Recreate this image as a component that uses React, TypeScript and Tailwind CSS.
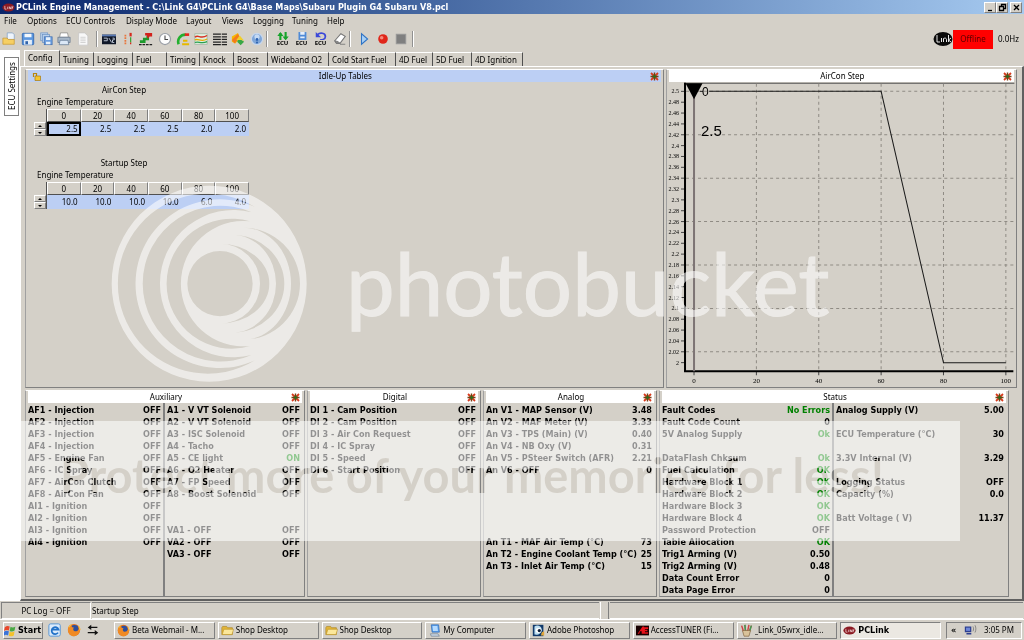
import React from "react";

type Row = [string, string, ("g" | "k")?] | null;

const RAISED = "border border-t-white border-l-white border-r-[#808080] border-b-[#808080]";
const SUNKEN = "border border-t-[#808080] border-l-[#808080] border-r-white border-b-white";
const BOLD = "font-['DejaVu_Sans_Condensed','DejaVu_Sans',sans-serif] text-[9px] font-bold";

/* ---------- small drawings ---------- */

function Svg({ children, size = "size-4" }: { children: React.ReactNode; size?: string }) {
  return (
    <svg viewBox="0 0 16 16" className={`${size} shrink-0`} aria-hidden="true">
      {children}
    </svg>
  );
}

const LinkOval = () => (
  <>
    <ellipse cx="8" cy="8" rx="7.5" ry="5" fill="#8b1a22" />
    <path d="M3.5 6v4h2M7 7v3M9 10V7l2 3V7M12.5 6v4M12.5 8.5l1.5-1.5" stroke="#f0d8d8" strokeWidth=".9" fill="none" />
  </>
);
const Folder = () => (
  <>
    <path d="M1 4.5 2 3h5l1 1.5h6V13H1z" fill="#e2b53a" stroke="#a57c17" strokeWidth=".7" />
    <path d="M1.5 13 3.5 6.5h12L13.5 13z" fill="#fbe79a" stroke="#b98d20" strokeWidth=".7" />
  </>
);
const Fox = () => (
  <>
    <circle cx="8" cy="8" r="7" fill="#e0701c" />
    <circle cx="8.6" cy="6.8" r="4.6" fill="#2d4f9e" />
    <path d="M1 7C1 4 3 2 5 1.6 4.5 4 6 5 8 5.2 6.5 6.6 7 9 9 9.4c2 .3 3.6-.6 4.4-2.4L15 6c.5 5-3 9-7 9S1 12 1 7z" fill="#f08a24" />
    <path d="M2 5c1-2 2-3 3-3.4M13.5 3.5 15 8" stroke="#f7c344" strokeWidth="1.2" fill="none" />
  </>
);

const fileIcons: [string, React.ReactNode][] = [
  ["Open", <>
    <path d="M6 1h6l2 2v6H6z" fill="#eef4fb" stroke="#7b9cc4" strokeWidth=".8" />
    <path d="M1 7h5l1 1.500h7V14H1z" fill="#f6cf62" stroke="#c9962c" strokeWidth=".8" />
  </>],
  ["Save", <>
    <rect x="1.5" y="1.5" width="13" height="13" rx="1" fill="#5b96de" stroke="#3468b0" />
    <path d="M4 2h8v4H4z" fill="#f3f8fd" />
    <path d="M3.500 9h9v5.500h-9z" fill="#e3edf8" />
    <path d="M5 10.5h3V14H5z" fill="#3164ab" />
  </>],
  ["Save All", <>
    <rect x="2" y="1" width="8" height="9" fill="#b9d0ec" stroke="#6d93c4" strokeWidth=".8" />
    <rect x="4" y="3" width="8" height="9" fill="#b9d0ec" stroke="#6d93c4" strokeWidth=".8" />
    <rect x="6" y="5.500" width="9" height="9" fill="#6d9fdf" stroke="#3d6cae" strokeWidth=".8" />
    <path d="M8 6h5v3H8zM8 11h5v3H8z" fill="#e6f0fb" />
  </>],
  ["Print", <>
    <path d="M4 1h8l1 5H3z" fill="#fff" stroke="#777" strokeWidth=".7" />
    <path d="M1 6h14v6H1z" fill="#a9b8c8" stroke="#62738a" strokeWidth=".8" />
    <path d="M3.500 9.500h9l1 5h-11z" fill="#dbe8f7" stroke="#5a718c" strokeWidth=".8" />
  </>],
  ["New", <>
    <path d="M3 1h7l3.500 3.500V15H3z" fill="#f8f8f8" stroke="#c4c4c4" strokeWidth=".8" />
    <path d="M5 6h6M5 8h6M5 10h6M5 12h6" stroke="#cecece" />
  </>],
];

const viewIcons: [string, React.ReactNode][] = [
  ["Gauges", <>
    <rect x="0" y="3" width="16" height="11" fill="#101828" />
    <path d="M0 3h16v2H0z" fill="#5a7ab5" />
    <path d="M2 7h4v3H2M8 7l3 5M12 7h2v2h-2v3h2" stroke="#c9d3e4" fill="none" />
  </>],
  ["Bars", <>
    <path d="M5 3v12" stroke="#e8763c" strokeWidth="2" strokeDasharray="2 1" />
    <path d="M11 1v4" stroke="#d62a1c" strokeWidth="2.500" />
    <path d="M11 6v6" stroke="#3aa53a" strokeWidth="1.500" />
    <path d="M11 12v2" stroke="#d62a1c" strokeWidth="1.500" />
  </>],
  ["Map", <>
    <path d="M1 11h5v-3h4V4" stroke="#1b9a2b" strokeWidth="3" fill="none" />
    <path d="M7 1h8v4h-3l-2 3-1-4H7z" fill="#d3211b" />
    <path d="M0 14.500h15" stroke="#222" strokeWidth="1.500" strokeDasharray="3 1" />
  </>],
  ["Clock", <>
    <circle cx="8" cy="8" r="6.300" fill="#fdfdfd" stroke="#9a9fa6" strokeWidth="1.400" />
    <path d="M8 4v4.500h3.500" stroke="#444" strokeWidth="1.200" fill="none" />
  </>],
  ["Dial", <>
    <path d="M3 14C1 8 5 3 11 3" stroke="#22b02e" strokeWidth="3" fill="none" />
    <path d="M10 3h5" stroke="#e3261b" strokeWidth="3" />
    <path d="M7 14h8M8 10h5" stroke="#e6b800" strokeWidth="2.500" />
  </>],
  ["Graph", <>
    <rect x="1" y="2" width="14" height="12" fill="#dff0df" stroke="#9cb09c" strokeWidth=".8" />
    <path d="M1 6c4-4 6 3 14-2" stroke="#d93025" strokeWidth="1.500" fill="none" />
    <path d="M1 9c4-2 7 3 14-1" stroke="#e6a700" strokeWidth="1.500" fill="none" />
    <path d="M1 12c4-2 7 2 14-1" stroke="#2a9f50" strokeWidth="1.500" fill="none" />
  </>],
  ["List", <path d="M0 2.500h9M0 5.500h9M0 8.500h9M0 11.500h9M0 14.500h9M10 2.500h6M10 5.500h6M10 8.500h6M10 11.500h6M10 14.500h6" stroke="#222" strokeWidth="1.500" />],
  ["Surface", <>
    <path d="M1 5 8 1l2 6-5 6-4-2z" fill="#f6b800" />
    <path d="M1 9 8 2l2 4-6 7z" fill="#f47a1d" />
    <path d="M9 7l6 4-4 4-4-4z" fill="#39a845" />
    <path d="M6 9l4-5 5 6-3-1z" fill="#f0cf2b" />
  </>],
  ["Help", <>
    <circle cx="8" cy="8" r="6.500" fill="#7ea6d9" stroke="#c7d6ea" strokeWidth="1.500" />
    <circle cx="8" cy="5.500" r="3" fill="#c5daf4" />
    <path d="M8 7v3" stroke="#2e63b0" strokeWidth="2.500" />
    <circle cx="8" cy="12" r="1.200" fill="#2e63b0" />
  </>],
];

const ecuIcons: [string, React.ReactNode][] = [
  ["Sync ECU", <>
    <path d="M5 9V1M11 0v8" stroke="#17a32b" strokeWidth="2.400" />
    <path d="M1.500 4.500 5 0l3.500 4.500zM7.500 5 11 9.500 14.500 5z" fill="#17a32b" />
  </>],
  ["Store ECU", <>
    <rect x="4" y="0" width="9" height="9" fill="#4f8ad6" />
    <path d="M6 0h5v3H6zM6 5h5v2H6z" fill="#e6effa" />
  </>],
  ["Reload ECU", <>
    <path d="M4 3c3-3 9-2 9 2 0 3-4 4-6 4" stroke="#3b48d8" strokeWidth="2" fill="none" />
    <path d="M2 0v6h6z" fill="#3b48d8" />
  </>],
];

const runIcons: [string, React.ReactNode][] = [
  ["Play", <path d="M4 2v12l7-6z" fill="#a8d0f5" stroke="#2f74c6" strokeWidth="1.200" />],
  ["Record", <>
    <circle cx="8" cy="8" r="5.500" fill="#e0261a" />
    <circle cx="6.500" cy="6.500" r="2" fill="#f58a7c" />
  </>],
  ["Stop", <rect x="2.500" y="2.500" width="11" height="11" fill="#7f7f7f" stroke="#9a9a9a" />],
];

function PinWheel() {
  return (
    <svg viewBox="0 0 9 9" className="size-[9px]" aria-hidden="true">
      <path d="M1 1l7 7M8 1 1 8" stroke="#d83a1c" strokeWidth="1.800" />
      <path d="M4.500 .5v8M.5 4.500h8" stroke="#7a3d12" strokeWidth="1.400" />
      <path d="M2.500 4.500h4M4.500 2.500v4" stroke="#2d6a1e" strokeWidth="1.600" />
    </svg>
  );
}

/* ---------- chrome ---------- */

function TitleBar() {
  return (
    <header className="flex h-[14px] items-center bg-linear-to-r from-[#0a246a] to-[#a6caf0] pr-[2px] pl-[2px]">
      <Svg size="size-[13px]"><LinkOval /></Svg>
      <h1 className={`ml-px flex-1 truncate leading-3 text-white ${BOLD}`}>
        PCLink Engine Management - C:\Link G4\PCLink G4\Base Maps\Subaru Plugin G4 Subaru V8.pcl
      </h1>
      {[
        ["Minimize", "M2 7.500h4"],
        ["Restore", "M3.500 3V1.500h4v4H6M1.500 3.500h4v4h-4zM1 3.500h5M3 1.500h5"],
        ["Close", "M2 2l5 5M7 2 2 7"],
      ].map(([label, d]) => (
        <button key={label} aria-label={label} className={`h-[11px] w-3 bg-[#d4d0c8] last:ml-[2px] ${RAISED}`}>
          <svg viewBox="0 0 9 9" className="mx-auto size-[9px]" aria-hidden="true">
            <path d={d} stroke="#000" strokeWidth="1.300" fill="none" />
          </svg>
        </button>
      ))}
    </header>
  );
}

const menus: [string, string][] = [
  ["File", "w-[23px]"], ["Options", "w-[39px]"], ["ECU Controls", "w-[60px]"], ["Display Mode", "w-[60px]"],
  ["Layout", "w-9"], ["Views", "w-[31px]"], ["Logging", "w-[39px]"], ["Tuning", "w-[35px]"], ["Help", "w-8"],
];

function MenuBar() {
  return (
    <nav className="flex h-[14px] items-center pl-1">
      {menus.map(([m, w]) => (
        <button key={m} className={`text-left whitespace-nowrap ${w}`}>{m}</button>
      ))}
    </nav>
  );
}

function ToolButtons({ items, className }: { items: [string, React.ReactNode][]; className: string }) {
  return (
    <div className={`grid justify-items-center ${className}`}>
      {items.map(([label, icon]) => (
        <button key={label} aria-label={label}><Svg size="size-[14px]">{icon}</Svg></button>
      ))}
    </div>
  );
}

const Divider = () => <div className="h-4 w-[2px] border-l border-l-[#909090] border-r border-r-white" />;

function ToolBar() {
  return (
    <div className="flex h-[22px] items-center">
      <ToolButtons items={fileIcons} className="mr-1 w-[92px] grid-cols-5" />
      <Divider />
      <ToolButtons items={viewIcons} className="ml-[2px] w-[166px] grid-cols-9" />
      <Divider />
      <div className="ml-[5px] grid w-[76px] grid-cols-4 justify-items-center">
        {ecuIcons.map(([label, icon]) => (
          <button key={label} aria-label={label} className="flex flex-col items-center">
            <svg viewBox="0 0 16 9" className="h-2 w-[14px]" aria-hidden="true">{icon}</svg>
            <span className="text-[6px] leading-[6px] font-bold">ECU</span>
          </button>
        ))}
        <button aria-label="Erase">
          <Svg size="size-[14px]">
            <path d="M2 10 9 2l5 3-6 8H4z" fill="#fff" stroke="#777" strokeWidth="1.200" />
            <path d="M2 10l4 1 2 2H4zM8 14h6" fill="#888" stroke="#777" />
          </Svg>
        </button>
      </div>
      <Divider />
      <ToolButtons items={runIcons} className="ml-[5px] mr-[2px] w-[54px] grid-cols-3" />
      <Divider />
      <div className="ml-auto flex items-center pr-[5px]">
        <svg viewBox="0 0 20 16" className="h-4 w-5" role="img" aria-label="Link">
          <ellipse cx="10" cy="8" rx="9.500" ry="7" fill="#0a0a0a" />
          <path d="M4 4v7h3M8.500 7v4M10.500 11V7.500c2-1 3 0 3 1V11M15.500 4v7M18 7l-2.500 2L18 11" stroke="#e8e8e8" strokeWidth="1" fill="none" />
        </svg>
        <span className="flex h-[19px] w-10 items-center justify-center bg-[#ff0000] text-[#5a0000]">Offline</span>
        <span className="ml-[5px]">0.0Hz</span>
      </div>
    </div>
  );
}

const tabs: [string, string][] = [
  ["Tuning", "w-[34px]"], ["Logging", "w-[39px]"], ["Fuel", "w-[34px]"], ["Timing", "w-[33px]"], ["Knock", "w-[34px]"],
  ["Boost", "w-[34px]"], ["Wideband O2", "w-[61px]"], ["Cold Start Fuel", "w-[67px]"], ["4D Fuel", "w-[37px]"],
  ["5D Fuel", "w-[39px]"], ["4D Ignition", "w-[51px]"],
];

function TabStrip() {
  return (
    <div role="tablist" className="flex h-4 items-end pl-1">
      <button role="tab" aria-selected="true" className="h-4 w-9 border-t border-r border-l border-t-white border-r-[#505050] border-l-white pb-px pl-[3px] text-left">
        Config
      </button>
      {tabs.map(([t, w]) => (
        <button key={t} role="tab" aria-selected="false" className={`h-[14px] border-t border-r border-t-white border-r-[#505050] pl-[3px] text-left whitespace-nowrap ${w}`}>
          {t}
        </button>
      ))}
    </div>
  );
}

/* ---------- panels ---------- */

function Panel({ title, tint, lock, children }: { title: string; tint?: boolean; lock?: boolean; children: React.ReactNode }) {
  return (
    <section className="flex min-w-0 flex-col border border-t-white border-r-[#808080] border-b-[#808080] border-l-[#a0a0a0]">
      <div className={`mx-[2px] flex h-3 shrink-0 items-center pr-[2px] pl-1 ${tint ? "bg-[#bccff4]" : "bg-white"}`}>
        <span className="w-[9px]">
          {lock && (
            <svg viewBox="0 0 9 9" className="size-[9px]" aria-hidden="true">
              <path d="M1.500 5V1.500h3V4" stroke="#b8860b" strokeWidth="1.200" fill="none" />
              <path d="M3 4h5.500v4.500H3z" fill="#f4c531" stroke="#a87a10" strokeWidth=".7" />
            </svg>
          )}
        </span>
        <h2 className="flex-1 text-center">{title}</h2>
        <button aria-label={`${title} options`}><PinWheel /></button>
      </div>
      {children}
    </section>
  );
}

function StepTable({ title, values, active }: { title: string; values: string[]; active?: boolean }) {
  return (
    <div className="h-[73px] w-[222px]">
      <h3 className="w-[192px] text-center leading-3">{title}</h3>
      <p className="pl-[9px] leading-[11px]">Engine Temperature</p>
      <div className="mt-[2px] flex items-end pl-[6px]">
        <div className="flex w-3 flex-col">
          <button aria-label={`${title} up`} className={`flex h-[7px] items-center justify-center ${RAISED}`}>
            <svg viewBox="0 0 4 2" className="h-[2px] w-1" aria-hidden="true"><path d="M0 2 2 0l2 2z" /></svg>
          </button>
          <button aria-label={`${title} down`} className={`flex h-[7px] items-center justify-center ${RAISED}`}>
            <svg viewBox="0 0 4 2" className="h-[2px] w-1" aria-hidden="true"><path d="M0 0h4L2 2z" /></svg>
          </button>
        </div>
        <table className="w-[203px] table-fixed border-separate border-spacing-0 border-l border-l-[#505050] leading-[10px]" aria-label={title}>
          <thead>
            <tr>
              {["0", "20", "40", "60", "80", "100"].map((h) => (
                <th key={h} scope="col" className="h-[13px] border-t border-r border-b border-l border-t-white border-r-[#808080] border-b-[#505050] border-l-white p-0 text-center font-normal">
                  {h}
                </th>
              ))}
            </tr>
          </thead>
          <tbody>
            <tr>
              {values.map((v, i) => (
                <td key={i} className={`h-[14px] bg-[#bccff4] p-0 text-right ${active && i === 0 ? "border-2 border-black pr-px" : "pr-[3px]"}`}>
                  {v}
                </td>
              ))}
            </tr>
          </tbody>
        </table>
      </div>
    </div>
  );
}

function StepChart() {
  const X = (v: number) => 694 + v * 3.115;
  const Y = (v: number) => 362.5 - (v - 2) * 542;
  const ticks = Array.from({ length: 26 }, (_, i) => Math.round((2.5 - i * 0.02) * 100) / 100);
  return (
    <div className="flex min-h-0 flex-1 items-start">
      <svg viewBox="667 83 349 303" className="h-full w-full" role="img" aria-label="AirCon Step against engine temperature">
        <path d="M684 83.500h330" stroke="#555" strokeWidth="1" />
        {ticks.map((t, i) => (
          <g key={t}>
            <text x="679" y={Y(t) + 2} textAnchor="end" className="font-['Liberation_Serif',serif] text-[6px]">{String(t)}</text>
            <path d={`M681 ${Y(t)}h3`} stroke="#444" strokeWidth="1" />
            {i % 4 === 0 && <path d={`M686 ${Y(t)}h327`} stroke="#8f8b84" strokeWidth="1" strokeDasharray="3 3" />}
          </g>
        ))}
        {[20, 40, 60, 80, 100].map((v) => (
          <path key={v} d={`M${X(v)} 84V370`} stroke="#8f8b84" strokeWidth="1" strokeDasharray="3 3" />
        ))}
        {[0, 20, 40, 60, 80, 100].map((v) => (
          <g key={v}>
            <path d={`M${X(v)} 371v4`} stroke="#444" />
            <text x={X(v)} y="383" textAnchor="middle" className="font-['Liberation_Serif',serif] text-[7px]">{v}</text>
          </g>
        ))}
        <path d="M685 83v289M684 371h329" stroke="#000" strokeWidth="2" fill="none" />
        <path d="M694 92v279" stroke="#7d7474" strokeWidth="2" />
        <path d={`M709 ${Y(2.5)}H${X(60)}L${X(80)} ${Y(2)}H${X(100)}`} stroke="#1a1a1a" strokeWidth="1" fill="none" />
        <path d="M685.500 83.500h17L694 99.500z" fill="#000" />
        <path d="M700 91.500h3" stroke="#222" />
        <text x="702" y="96" className="font-['Liberation_Sans',sans-serif] text-[12px]">0</text>
        <text x="701" y="136" className="font-['Liberation_Sans',sans-serif] text-[15px]">2.5</text>
      </svg>
    </div>
  );
}

function Rows({ rows, label }: { rows: Row[]; label: string }) {
  return (
    <table className="w-full" aria-label={label}>
      <tbody>
        {rows.map((r, i) => (
          <tr key={i} className="h-3">
            <th scope="row" className="w-full max-w-0 p-0 text-left whitespace-nowrap">{r?.[0]}</th>
            <td className={`p-0 text-right whitespace-nowrap ${r?.[2] === "g" ? "text-[#008000]" : ""}`}>{r?.[1]}</td>
          </tr>
        ))}
      </tbody>
    </table>
  );
}

function RowColumns({ cols, title }: { cols: Row[][]; title: string }) {
  return (
    <div className={`flex flex-1 leading-3 ${BOLD}`}>
      {cols.map((rows, i) => (
        <div key={i} className={`flex-1 pt-px pl-[2px] ${i > 0 ? "border-l-2 border-l-[#808080]" : ""} ${i === cols.length - 1 ? "pr-1" : "pr-[2px]"}`}>
          <Rows rows={rows} label={`${title} ${i + 1}`} />
        </div>
      ))}
    </div>
  );
}

const auxiliary: Row[][] = [
  [
    ["AF1 - Injection", "OFF"], ["AF2 - Injection", "OFF"], ["AF3 - Injection", "OFF"], ["AF4 - Injection", "OFF"],
    ["AF5 - Engine Fan", "OFF"], ["AF6 - IC Spray", "OFF"], ["AF7 - AirCon Clutch", "OFF"], ["AF8 - AirCon Fan", "OFF"],
    ["AI1 - Ignition", "OFF"], ["AI2 - Ignition", "OFF"], ["AI3 - Ignition", "OFF"], ["AI4 - Ignition", "OFF"],
  ],
  [
    ["A1 - V VT Solenoid", "OFF"], ["A2 - V VT Solenoid", "OFF"], ["A3 - ISC Solenoid", "OFF"], ["A4 - Tacho", "OFF"],
    ["A5 - CE light", "ON", "g"], ["A6 - O2 Heater", "OFF"], ["A7 - FP Speed", "OFF"], ["A8 - Boost Solenoid", "OFF"],
    null, null, ["VA1 - OFF", "OFF"], ["VA2 - OFF", "OFF"], ["VA3 - OFF", "OFF"],
  ],
];
const digital: Row[][] = [[
  ["DI 1 - Cam Position", "OFF"], ["DI 2 - Cam Position", "OFF"], ["DI 3 - Air Con Request", "OFF"],
  ["DI 4 - IC Spray", "OFF"], ["DI 5 - Speed", "OFF"], ["DI 6 - Start Position", "OFF"],
]];
const analog: Row[][] = [[
  ["An V1 - MAP Sensor (V)", "3.48"], ["An V2 - MAF Meter (V)", "3.33"], ["An V3 - TPS (Main) (V)", "0.40"],
  ["An V4 - NB Oxy (V)", "0.31"], ["An V5 - PSteer Switch (AFR)", "2.21"], ["An V6 - OFF", "0"],
  null, null, null, null, null,
  ["An T1 - MAF Air Temp (°C)", "73"], ["An T2 - Engine Coolant Temp (°C)", "25"], ["An T3 - Inlet Air Temp (°C)", "15"],
]];
const status: Row[][] = [
  [
    ["Fault Codes", "No Errors", "g"], ["Fault Code Count", "0"], ["5V Analog Supply", "Ok", "g"], null,
    ["DataFlash Chksum", "Ok", "g"], ["Fuel Calculation", "OK", "g"], ["Hardware Block 1", "OK", "g"],
    ["Hardware Block 2", "OK", "g"], ["Hardware Block 3", "OK", "g"], ["Hardware Block 4", "OK", "g"],
    ["Password Protection", "OFF"], ["Table Allocation", "OK", "g"], ["Trig1 Arming (V)", "0.50"],
    ["Trig2 Arming (V)", "0.48"], ["Data Count Error", "0"], ["Data Page Error", "0"],
  ],
  [
    ["Analog Supply (V)", "5.00"], null, ["ECU Temperature (°C)", "30"], null, ["3.3V Internal (V)", "3.29"], null,
    ["Logging Status", "OFF"], ["Capacity (%)", "0.0"], null, ["Batt Voltage ( V)", "11.37"],
  ],
];

/* ---------- bottom bars ---------- */

function StatusBar() {
  return (
    <footer className="flex h-[18px] items-stretch gap-px px-px pt-px">
      <div className={`flex w-[90px] items-center justify-center ${SUNKEN}`}>PC Log = OFF</div>
      <div className="flex flex-[508] items-center border-t border-b border-t-[#808080] border-b-white">Startup Step</div>
      <div className="w-[9px] border-r border-l border-r-[#808080] border-l-white" />
      <div className="flex-[414] border-t border-b border-t-[#808080] border-b-white" />
    </footer>
  );
}

const tasks: [string, React.ReactNode][] = [
  ["Beta Webmail - M...", <Fox />],
  ["Shop Desktop", <Folder />],
  ["Shop Desktop", <Folder />],
  ["My Computer", <>
    <path d="M4 1h9l1 9H5z" fill="#5aa2ee" stroke="#2b62ad" strokeWidth=".8" />
    <path d="M5.500 2.500h6l.7 6h-6z" fill="#b5dbff" />
    <path d="M3 12h9l2 3H4z" fill="#c9d5e3" stroke="#5f7187" strokeWidth=".7" />
  </>],
  ["Adobe Photoshop", <>
    <rect x="1" y="1" width="13" height="14" fill="#123a6b" />
    <path d="M3 3c4-3 9 0 9 4s-4 7-9 6z" fill="#bfe0f2" />
    <ellipse cx="8" cy="8" rx="3.500" ry="3" fill="#fff" />
    <circle cx="9" cy="8" r="2" fill="#0b1d36" />
    <path d="M12 10l3-1v5h-4z" fill="#e0a53a" />
  </>],
  ["AccessTUNER  (Fi...", <>
    <path d="M0 2h16v12H0z" fill="#180000" />
    <path d="M2 12 8 3h2v9H7V9H5l-1 3zM10 4h5v2h-4v1h3v2h-3v1h4v2h-5z" fill="#e8121a" />
  </>],
  ["_Link_05wrx_idle...", <>
    <path d="M2 2l3 9M6 1l1 10M11 1 9 11M14 2l-3 9" stroke="#c44" strokeWidth="1.800" />
    <path d="M6 1l1 10M14 2l-3 9" stroke="#3f9d55" strokeWidth="1.800" />
    <path d="M3 8h10l-2 7H5z" fill="#d9c39a" stroke="#80613a" strokeWidth=".8" />
  </>],
  ["PCLink", <LinkOval />],
];

function TaskBar() {
  return (
    <footer className="flex h-[21px] items-center border-t border-t-white pr-[2px] pl-[3px]">
      <button className={`flex h-[17px] w-10 items-center gap-px ${BOLD} ${RAISED}`}>
        <Svg size="size-[13px]">
          <path d="M1 4c2-2 4-2 6-1L6 8C4 7 2 7 0 8.500z" fill="#e8472b" />
          <path d="M8 3.500c2 1 4 1 6-.5l-1 5c-2 1.500-4 1.500-6 .5z" fill="#4aa843" />
          <path d="M0 9.500C2 8 4 8 6 9l-1 5c-2-1-4-1-5 .5z" fill="#3b74d8" />
          <path d="M7 9.500c2 1 4 1 6-.5l-1 5c-2 1.500-4 1.500-6 .5z" fill="#f4c22b" />
        </Svg>
        Start
      </button>
      <div className="ml-[5px] flex w-[66px] gap-[5px]">
        <button aria-label="Internet Explorer">
          <Svg size="size-[14px]">
            <rect x="1" y="1" width="13" height="14" rx="2" fill="#dbeafa" stroke="#4a8fd6" />
            <path d="M11.500 11a4 4 0 1 1 .5-3.500H5" stroke="#2272c8" strokeWidth="2" fill="none" />
          </Svg>
        </button>
        <button aria-label="Firefox"><Svg size="size-[14px]"><Fox /></Svg></button>
        <button aria-label="Switch">
          <Svg size="size-[14px]">
            <path d="M4 5h9M2 11h9" stroke="#111" strokeWidth="1.500" />
            <path d="M2 5l4-3v6zM14 11l-4-3v6z" fill="#111" />
          </Svg>
        </button>
      </div>
      <div className="grid min-w-0 flex-1 grid-cols-8 gap-[3px]">
        {tasks.map(([name, icon], i) => {
          const on = i === tasks.length - 1;
          return (
            <button key={i} className={`flex h-[17px] min-w-0 items-center gap-[2px] pl-[2px] whitespace-pre ${on ? `bg-[#ebe8e2] ${BOLD} ${SUNKEN}` : RAISED}`}>
              <Svg size="size-[13px]">{icon}</Svg>
              <span className="truncate">{name}</span>
            </button>
          );
        })}
      </div>
      <div className={`ml-[5px] flex h-[17px] w-[76px] items-center justify-between pr-[7px] pl-1 ${SUNKEN}`}>
        <button aria-label="Show hidden icons" className={BOLD}>«</button>
        <Svg size="size-[13px]">
          <path d="M1 3h8v7H1zM3 11h6v2H3z" fill="#2d3f8f" />
          <path d="M2.500 4.500h5v4h-5z" fill="#6f87d8" />
          <path d="M11 3c1 2 1 4 0 6M13.500 1.500c1.500 3 1.500 6 0 9" stroke="#777" fill="none" />
        </Svg>
        <time>3:05 PM</time>
      </div>
    </footer>
  );
}

/* ---------- translucent branding laid over the window ---------- */

function Watermark() {
  return (
    <div className="pointer-events-none absolute inset-0 overflow-hidden">
      <svg viewBox="30 39 600 600" className="absolute top-[183px] left-[110px] size-[200px] opacity-[.57]" aria-hidden="true">
        <path
          fill="#fff"
          fillRule="evenodd"
          d="M35 341a292.500 294 0 1 0 585 0a292.500 294 0 1 0-585 0z
             M465 111A270 270 0 1 0 465 571A253 253 0 1 1 465 111z
             M455 127A233.500 233.500 0 1 0 455 555A220.800 220.800 0 1 1 455 127z
             M450 154A195 195 0 1 0 450 528A188 188 0 1 1 450 154z
             M430 173A170 168 0 0 1 430 509A143 168 0 0 0 430 173z
             M395 194A158 147 0 0 1 395 488A133 147 0 0 0 395 194z
             M360 221A148 120 0 0 1 360 461A120 120 0 0 0 360 221z
             M262 341a98 98 0 1 0 196 0a98 98 0 1 0-196 0z"
        />
      </svg>
      <p className="absolute top-[231px] left-[346px] font-['Lato',sans-serif] text-[87px] leading-[104px] text-white opacity-[.57] [-webkit-text-stroke:1px_white]">
        photobucket
      </p>
      <p className="absolute top-[421px] left-0 flex h-[120px] w-[960px] items-center bg-[#919191] pb-3 pl-[60px] font-['Lato',sans-serif] text-[47px] leading-[52px] font-bold whitespace-nowrap text-black mix-blend-screen">
        Protect more of your memories for less!
      </p>
    </div>
  );
}

export default function App() {
  return (
    <div className="relative isolate flex min-h-screen flex-col bg-[#d4d0c8] font-['Noto_Sans',sans-serif] text-[8px] leading-3 text-black">
      <TitleBar />
      <MenuBar />
      <ToolBar />
      <div className="flex flex-1">
        <aside className="w-5 shrink-0 bg-white pt-[7px] pl-1">
          <button className="flex h-[59px] w-[15px] rotate-180 items-center justify-center border border-[#808080] [writing-mode:vertical-rl]">
            ECU Settings
          </button>
        </aside>
        <div className="flex min-w-0 flex-1 flex-col">
          <TabStrip />
          <main className="flex flex-1 flex-col border-t border-r-2 border-b-2 border-l border-t-white border-r-[#606060] border-b-[#606060] border-l-white pt-[2px] pb-[2px] pl-1">
            <div className="grid flex-1 grid-cols-[638fr_351fr] gap-[2px] pr-[5px]">
              <Panel title="Idle-Up Tables" tint lock>
                <div className="pt-[2px] pl-[2px]">
                  <StepTable title="AirCon Step" values={["2.5", "2.5", "2.5", "2.5", "2.0", "2.0"]} active />
                  <StepTable title="Startup Step" values={["10.0", "10.0", "10.0", "10.0", "6.0", "4.0"]} />
                </div>
              </Panel>
              <Panel title="AirCon Step"><StepChart /></Panel>
            </div>
            <div className="mt-[2px] grid grid-cols-[280fr_174fr_174fr_350fr] gap-[2px] pr-[13px]">
              <Panel title="Auxiliary"><RowColumns cols={auxiliary} title="Auxiliary" /></Panel>
              <Panel title="Digital"><RowColumns cols={digital} title="Digital" /></Panel>
              <Panel title="Analog"><RowColumns cols={analog} title="Analog" /></Panel>
              <Panel title="Status"><RowColumns cols={status} title="Status" /></Panel>
            </div>
          </main>
        </div>
      </div>
      <StatusBar />
      <TaskBar />
      <Watermark />
    </div>
  );
}
